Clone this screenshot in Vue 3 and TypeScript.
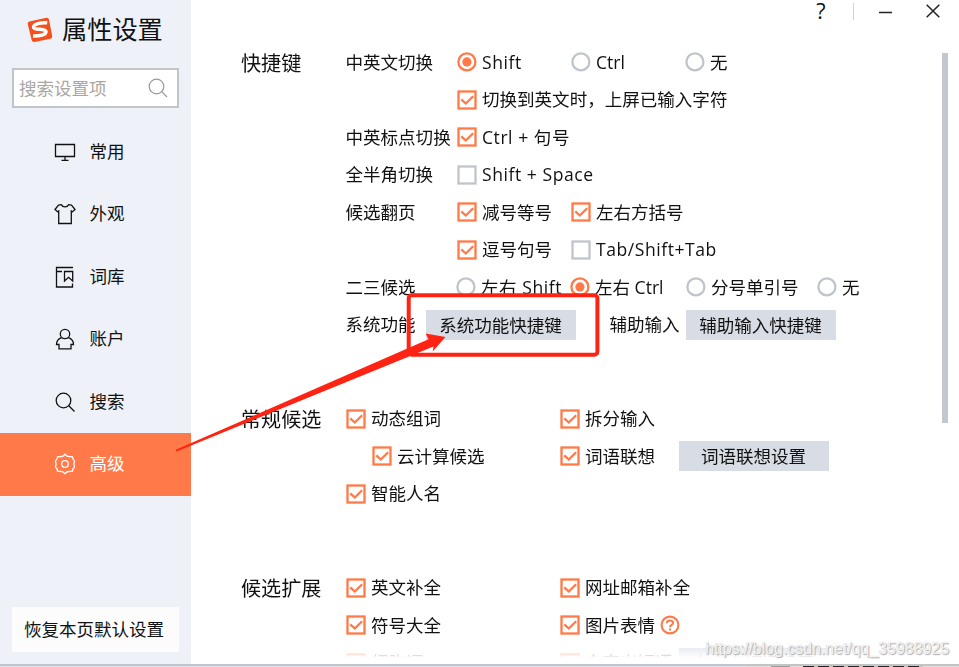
<script setup lang="ts">
type Kind = 'check' | 'radio' | 'label' | 'button'

interface Item {
  kind: Kind
  text: string
  width: number
  on?: boolean
  help?: boolean
  indent?: number
}

interface Section {
  id: string
  title: string
  rows: Item[][]
}

const check = (text: string, width: number, on = true): Item => ({ kind: 'check', text, width, on })
const radio = (text: string, width: number, on = false): Item => ({ kind: 'radio', text, width, on })
const label = (text: string, width = 111): Item => ({ kind: 'label', text, width })
const button = (text: string, width = 150): Item => ({ kind: 'button', text, width })

const sections: Section[] = [
  {
    id: 'keys',
    title: '快捷键',
    rows: [
      [label('中英文切换'), radio('Shift', 114, true), radio('Ctrl', 114), radio('无', 60)],
      [label(''), check('切换到英文时，上屏已输入字符', 300)],
      [label('中英标点切换'), check('Ctrl + 句号', 200)],
      [label('全半角切换'), check('Shift + Space', 200, false)],
      [label('候选翻页'), check('减号等号', 114), check('左右方括号', 140)],
      [label(''), check('逗号句号', 114), check('Tab/Shift+Tab', 160, false)],
      [label('二三候选', 110), radio('左右 Shift', 114), radio('左右 Ctrl', 116, true), radio('分号单引号', 131), radio('无', 60)],
      [label('系统功能', 80), button('系统功能快捷键', 184), label('辅助输入', 76), button('辅助输入快捷键')],
    ],
  },
  {
    id: 'normal',
    title: '常规候选',
    rows: [
      [check('动态组词', 214), check('拆分输入', 119)],
      [{ ...check('云计算候选', 188), indent: 26 }, check('词语联想', 119), button('词语联想设置')],
      [check('智能人名', 214)],
    ],
  },
  {
    id: 'extend',
    title: '候选扩展',
    rows: [
      [check('英文补全', 214), check('网址邮箱补全', 160)],
      [check('符号大全', 214), { ...check('图片表情', 160), help: true }],
      [check('细胞词', 214), check('自定义短语', 119), button('自定义短语设置')],
    ],
  },
]

const nav = [
  { id: 'common', text: '常用' },
  { id: 'skin', text: '外观' },
  { id: 'dict', text: '词库' },
  { id: 'account', text: '账户' },
  { id: 'search', text: '搜索' },
  { id: 'advanced', text: '高级' },
]
const active = 'advanced'

const isWide = (text: string) => /Shift|\+/.test(text)
</script>

<template>
  <div class="window">
    <aside class="sidebar">
      <header class="brand">
        <svg class="logo" viewBox="0 0 26 26">
          <path d="M2.300 4.400 L19.500 .700 Q21.600 .400 22 2.500 L25.200 19 Q25.500 21.300 23.500 21.700 L7.500 24.900 Q5.300 25.200 4.700 23.200 L.700 7 Q.300 5 2.300 4.400 Z" fill="#f4511e" />
          <path d="M20.200 5.800 C14 5.300 6.300 7 6.600 10.200 C7 13.600 18.700 11 19 14.700 C19.200 18 12 19.200 6 18.900" fill="none" stroke="#fff" stroke-width="3.500" />
        </svg>
        <h1>属性设置</h1>
      </header>
      <div class="search">
        <span>搜索设置项</span>
        <svg viewBox="0 0 20 20"><circle cx="8.500" cy="8.500" r="7.300" /><path d="M13.700 13.700 19 19" /></svg>
      </div>
      <nav>
        <a v-for="n in nav" :key="n.id" :class="{ active: n.id === active }">
          <svg class="nav-icon" viewBox="0 0 22 22">
            <path v-if="n.id === 'common'" d="M1.500 3.500H20.500V15.500H1.500ZM11 15.500V19.300M7.500 19.300H14.500" />
            <path v-else-if="n.id === 'skin'" d="M7.500 1.700 C8.500 4.500 13.500 4.500 14.500 1.700 L17.500 2.200 L21 6.500 L18.500 8.700 L17.300 8 V20.500 H4.700 V8 L3.500 8.700 L1 6.500 L4.500 2.200 Z" />
            <path v-else-if="n.id === 'dict'" d="M19 1.500H2.500V21H18.500V17.500M2.500 5.500H8M10.500 5.500H18.700V15L14.600 11.300L10.500 15Z" />
            <template v-else-if="n.id === 'account'">
              <circle cx="11" cy="6" r="4.700" />
              <path d="M7.700 9.700 C4.500 10.700 2.600 13 2.500 16.500 H5 V20.800 H17 V16.500 H19.500 C19.400 13 17.500 10.700 14.300 9.700" />
            </template>
            <template v-else-if="n.id === 'search'">
              <circle cx="9.500" cy="9.500" r="7.300" /><path d="M14.800 14.800 20.500 20.500" />
            </template>
            <template v-else>
              <path d="M11 1.200 Q12.500 3.600 14.500 3.500 L18.500 3.800 Q18.500 6.500 20.600 8.200 Q19 11 20.600 14 Q18.500 15.500 18.500 18.200 L14.500 18.500 Q12.500 18.600 11 20.800 Q9.500 18.600 7.500 18.500 L3.500 18.200 Q3.500 15.500 1.400 14 Q3 11 1.400 8.200 Q3.500 6.500 3.500 3.800 L7.500 3.500 Q9.500 3.600 11 1.200 Z" stroke-linejoin="round" />
              <circle cx="11" cy="11" r="3.300" />
            </template>
          </svg>
          <span>{{ n.text }}</span>
        </a>
      </nav>
      <button class="reset">恢复本页默认设置</button>
    </aside>

    <main class="content">
      <section v-for="s in sections" :key="s.id" :class="['section', s.id]">
        <h2>{{ s.title }}</h2>
        <div class="rows">
          <div v-for="(row, r) in s.rows" :key="r" class="row">
            <div
              v-for="(it, i) in row"
              :key="i"
              class="item"
              :style="{ width: it.width + 'px', marginLeft: (it.indent ?? 0) + 'px' }"
            >
              <svg v-if="it.kind === 'check'" :class="['mark', { on: it.on }]" viewBox="0 0 20 20">
                <rect x="1.500" y="1.500" width="17" height="17" />
                <path v-if="it.on" d="M4.300 9.300 8.800 13.500 16.200 6.300" />
              </svg>
              <svg v-else-if="it.kind === 'radio'" :class="['mark', { on: it.on }]" viewBox="0 0 20 20">
                <circle cx="9.900" cy="9.900" r="8.500" />
                <circle v-if="it.on" class="dot" cx="9.900" cy="9.900" r="4.600" />
              </svg>
              <button v-if="it.kind === 'button'" class="btn">{{ it.text }}</button>
              <span v-else :class="['text', { wide: isWide(it.text) }]">{{ it.text }}</span>
              <svg v-if="it.help" class="help" viewBox="0 0 20 20">
                <circle cx="10" cy="10" r="8.400" />
                <path d="M6.900 8.200 C7 4.600 13.100 4.600 13.100 7.900 C13.100 10 10 9.900 10 12.200 M10 13.500V15.500" />
              </svg>
            </div>
          </div>
        </div>
      </section>
    </main>

    <div class="controls">
      <span class="q">?</span>
      <i class="sep"></i>
      <svg class="min" viewBox="0 0 14 14"><path d="M0 8.500H13" /></svg>
      <svg class="close" viewBox="0 0 14 14"><path d="M.7.700 13.300 13.300M13.300.700.700 13.300" /></svg>
    </div>
    <div class="scrollbar"></div>
    <svg class="annotation" viewBox="0 0 959 667">
      <rect x="408.700" y="295.200" width="188.700" height="59.500" rx="3" />
      <path d="M175.700 449.700 428.500 339.300 425.700 333.500 445.500 337 432.700 351.500 433.500 346.500 176.500 451.400Z" />
    </svg>
    <div class="edge"><i class="tan"></i><i class="gray"></i><i class="tan gap"></i><i class="dark"></i><i class="tan rest"></i></div>
    <div class="watermark">https://blog.csdn.net/qq_35988925</div>
  </div>
</template>

<style>
body {
  margin: 0;
  overflow: hidden;
}
</style>

<style scoped>
.window {
  position: relative;
  display: flex;
  width: 959px;
  height: 667px;
  overflow: hidden;
  background: #fff;
  color: #111;
  font: 17.55px/24px "Open Sans", "Noto Sans CJK SC", sans-serif;
}
h1, h2 {
  margin: 0;
  font-weight: 400;
}
button {
  border: 0;
  padding: 0;
  color: inherit;
  font: inherit;
}
svg {
  display: block;
  flex: none;
  fill: none;
}
.sidebar {
  display: flex;
  flex-direction: column;
  box-sizing: border-box;
  width: 191px;
  height: 664px;
  padding: 12px;
  background: #eef2f8;
}
.brand {
  display: flex;
  align-items: center;
  height: 36px;
  padding-left: 15px;
}
.logo {
  width: 26px;
  height: 26px;
}
.brand h1 {
  margin-left: 9px;
  padding-bottom: 2px;
  font-size: 25.2px;
  line-height: 34px;
}
.search {
  display: flex;
  flex: none;
  align-items: center;
  justify-content: space-between;
  box-sizing: border-box;
  width: 167px;
  height: 40px;
  margin-top: 20px;
  padding: 0 9px 0 5px;
  border: 2px solid #c0c5cc;
  background: #fff;
  color: #aaa6a2;
}
.search span {
  padding-bottom: 1px;
}
.search svg {
  width: 20px;
  height: 20px;
  stroke: #999;
  stroke-width: 1.2;
}
nav {
  margin: 12.5px -12px 0;
}
nav a {
  display: flex;
  align-items: center;
  height: 62.5px;
  padding-left: 53.5px;
}
nav a span {
  padding-bottom: 2px;
}
nav a.active {
  background: #ff7a48;
  color: #fff;
}
.nav-icon {
  width: 22px;
  height: 22px;
  margin-right: 14px;
  stroke: currentColor;
  stroke-width: 1.3;
}
.reset {
  width: 167px;
  height: 45px;
  margin-top: auto;
  padding: 0 3px 2px 0;
  background: #fcfcfd;
}
.content {
  flex: 1;
  height: 657px;
  overflow: hidden;
  mask-image: linear-gradient(#000 640px, transparent 658px);
}
.section {
  display: flex;
  padding-left: 50px;
}
.section h2 {
  width: 104.5px;
  font-size: 20.1px;
  line-height: 40px;
}
.keys { padding-top: 43.5px; }
.normal { padding-top: 56.5px; }
.extend { padding-top: 56.5px; }
.row {
  display: flex;
  align-items: center;
  height: 37.5px;
  white-space: nowrap;
}
.item {
  display: flex;
  flex: none;
  align-items: center;
}
.text {
  padding-bottom: 1px;
}
.wide {
  letter-spacing: .55px;
}
.mark {
  width: 20px;
  height: 20px;
  margin-right: 5.5px;
  stroke: #c0c5cc;
  stroke-width: 2.3;
}
.mark.on {
  stroke: #ff7a48;
}
.mark .dot {
  fill: #ff7a48;
  stroke: none;
}
.btn {
  width: 150px;
  height: 30px;
  background: #d8dce4;
}
.help {
  width: 20px;
  height: 20px;
  margin-left: 5px;
  stroke: #ff7a48;
  stroke-width: 2.1;
}
.controls {
  position: absolute;
  top: 0;
  right: 19px;
  display: flex;
  align-items: center;
  height: 22px;
}
.q {
  width: 14px;
  font-size: 21.5px;
  text-align: center;
}
.sep {
  width: 1px;
  height: 17px;
  margin: 0 25px;
  background: #d0d3d8;
}
.min, .close {
  width: 14px;
  height: 14px;
  stroke: #222;
  stroke-width: 1.5;
}
.min {
  margin-right: 33px;
}
.scrollbar {
  position: absolute;
  top: 53px;
  right: 11px;
  width: 6px;
  height: 370px;
  background: #c3c7ce;
}
.annotation {
  position: absolute;
  inset: 0;
  width: 959px;
  height: 667px;
}
.annotation rect {
  stroke: #ff2314;
  stroke-width: 4;
}
.annotation path {
  fill: #ff2314;
}
.edge {
  position: absolute;
  left: 0;
  bottom: 0;
  display: flex;
  box-sizing: border-box;
  width: 959px;
  height: 3px;
  padding-left: 745px;
  border-top: 2px solid #c0c5ca;
  background: #e2e7ee;
}
.tan {
  width: 26px;
  background: #e4e0dd;
}
.gray {
  width: 19px;
  background: #9b9b98;
}
.gap { width: 13px; }
.dark {
  width: 120px;
  background: repeating-linear-gradient(90deg, #252525 0 11px, #c5c0bc 11px 15px);
}
.rest { flex: 1; }
.watermark {
  position: absolute;
  right: 10px;
  bottom: 8px;
  color: #f4f4f4;
  font: 15.9px/20px "Liberation Sans", sans-serif;
  text-shadow: 1px 1px 1px #aaa, 0 0 1px #ccc;
}
</style>
